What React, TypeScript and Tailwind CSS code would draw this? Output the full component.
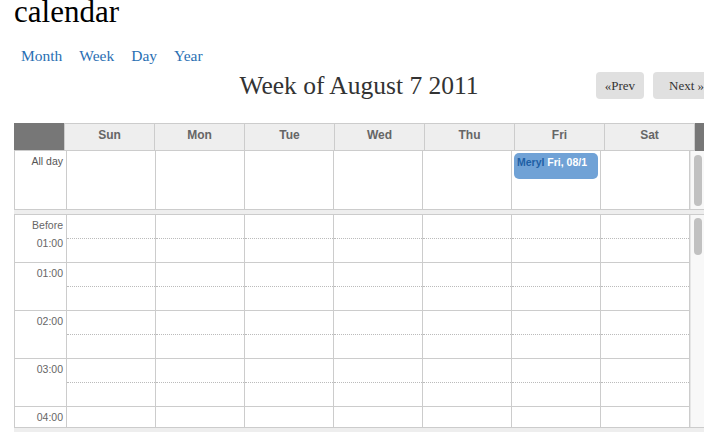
const days = ["Sun", "Mon", "Tue", "Wed", "Thu", "Fri", "Sat"];
const hours = [["Before", "01:00"], ["01:00"], ["02:00"], ["03:00"], ["04:00"]];
const views = ["Month", "Week", "Day", "Year"];

function Thumb({ top, height }: { top: string; height: string }) {
  return (
    <div className="w-[14px] h-full bg-[#f8f8f8] border-l border-[#e6e6e6] pl-[3px]">
      <div className={`w-[8px] rounded-full bg-[#c1c1c1] ${top} ${height}`} />
    </div>
  );
}

function AllDayRow() {
  return (
    <div className="flex h-[58px]">
      <div className="w-[53px] h-full border-l border-r border-[#ccc] text-right pr-[3px] pt-[1px] leading-[18px] text-[10.5px] text-[#555]">
        All day
      </div>
      {days.map((d) => (
        <div key={d} className="w-[89px] h-full border-r border-[#ccc]">
          {d === "Fri" && (
            <div className="ml-[2px] mt-[2px] w-[84px] h-[26px] rounded-[5px] bg-[#70a2d6] pl-[3px] pt-[3px] text-[10.5px] leading-[12px] font-bold whitespace-nowrap">
              <span className="text-[#1d5fa5]">Meryl</span>{" "}
              <span className="text-white">Fri, 08/1</span>
            </div>
          )}
        </div>
      ))}
      <Thumb top="mt-[4px]" height="h-[51px]" />
    </div>
  );
}

function HourRow({ labels }: { labels: string[] }) {
  return (
    <div className="flex h-[48px] shrink-0 border-b border-[#ccc]">
      <div className="w-[53px] h-full border-l border-r border-[#ccc] text-right pr-[3px] pt-[1px] leading-[18px] text-[10.5px] text-[#666]">
        {labels.map((l, i) => (
          <div key={i}>{l}</div>
        ))}
      </div>
      {days.map((d) => (
        <div key={d} className="w-[89px] h-full border-r border-[#ccc]">
          <div className="h-[24px] border-b border-dotted border-[#bbb]" />
        </div>
      ))}
    </div>
  );
}

export default function App() {
  return (
    <div className="w-[726px] h-[443px] bg-white font-['Liberation_Sans',Arial,sans-serif]">
      <div className="w-[704px]">
        <h1 className="pl-[14px] pt-[2px] h-[26px] text-[31px] leading-[20px] text-black font-['Liberation_Serif',serif]">
          calendar
        </h1>

        <nav className="mt-[20px] h-[20px] pl-[21px] flex gap-[17px] font-['Liberation_Serif',serif] text-[15.5px] leading-[20px] text-[#2a6fb3]">
          {views.map((v) => (
            <a key={v} href="#">
              {v}
            </a>
          ))}
        </nav>

        <div className="mt-[6px] ml-[14px] h-[28px] grid grid-cols-[1fr_auto_1fr] items-start font-['Liberation_Serif',serif]">
          <div />
          <h2 className="text-[25.5px] leading-[28px] text-[#333]">Week of August 7 2011</h2>
          <div className="flex justify-end gap-[9px] text-[13px] text-[#333]">
            <button className="h-[27px] px-[9px] rounded-[4px] bg-[#e0e0e0]">«Prev</button>
            <button className="h-[27px] w-[51px] pl-[16px] rounded-l-[4px] bg-[#e0e0e0] text-left whitespace-nowrap overflow-hidden">
              Next »
            </button>
          </div>
        </div>

        <div className="mt-[23px] ml-[14px] w-[690px]">
          {/* day headings */}
          <div className="flex h-[28px]">
            <div className="w-[50px] bg-[#777] border-b border-[#ccc]" />
            {days.map((d, i) => (
              <div
                key={d}
                className={`w-[90px] bg-[#eee] border-t border-b border-l border-[#ccc] text-center pt-[1px] text-[12px] leading-[20px] font-bold text-[#666] ${
                  i === 6 ? "w-[91px] border-r" : ""
                }`}
              >
                {d}
              </div>
            ))}
            <div className="w-[9px] bg-[#777]" />
          </div>

          <AllDayRow />

          <div className="h-[6px] border-y border-[#ccc] bg-[#eee]" />

          <div className="flex h-[212px]">
            <div className="w-[676px] h-full overflow-hidden flex flex-col">
              {hours.map((h, i) => (
                <HourRow key={i} labels={h} />
              ))}
            </div>
            <Thumb top="mt-[3px]" height="h-[37px]" />
          </div>

          <div className="h-[5px] border-t border-[#ccc] bg-[#eee]" />
        </div>
      </div>
    </div>
  );
}
